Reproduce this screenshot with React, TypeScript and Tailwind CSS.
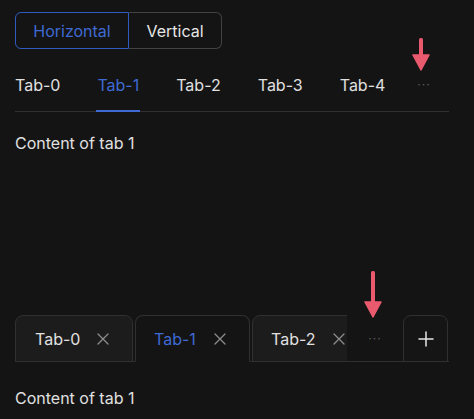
import React from "react";

function CloseIcon() {
  return (
    <svg width="12" height="12" viewBox="0 0 12 12" className="shrink-0">
      <path d="M1 1L11 11M11 1L1 11" stroke="#8c8c8c" strokeWidth="1.3" strokeLinecap="round" />
    </svg>
  );
}

function Arrow({ h }: { h: number }) {
  return (
    <svg width="20" height={h} viewBox={`0 0 20 ${h}`}>
      <rect x="8" y="0" width="4" height={h - 14} rx="1.5" fill="#ea5a6f" />
      <polygon points={`2,${h - 16} 18,${h - 16} 10,${h - 1}`} fill="#ea5a6f" strokeLinejoin="round" stroke="#ea5a6f" strokeWidth="1.5" />
    </svg>
  );
}

export default function App() {
  const topTabs = ["Tab-0", "Tab-1", "Tab-2", "Tab-3", "Tab-4"];
  return (
    <div className="relative w-[474px] h-[419px] bg-[#141414] overflow-hidden px-[15px] pt-[12px] text-[16px] leading-[24px] text-[#e0e0e0] font-['Inter','Noto_Sans',sans-serif]">
      {/* segmented */}
      <div className="flex h-[37px] w-[207px]">
        <div className="w-[114px] h-full flex items-center justify-center border border-[#2f5bc0] rounded-l-[6px] text-[#3f6ad3]">
          Horizontal
        </div>
        <div className="w-[93px] h-full flex items-center justify-center border border-l-0 border-[#424242] rounded-r-[6px] text-[#e6e6e6]">
          Vertical
        </div>
      </div>

      {/* line tabs */}
      <div className="relative flex items-center h-[63px] pt-[10px] w-[434px] border-b border-[#303030]">
        <div className="flex gap-[37px]">
          {topTabs.map((t, i) => (
            <div key={t} className={i === 1 ? "relative text-[#3f6ad3]" : ""}>
              {t}
              {i === 1 && (
                <div className="absolute left-[-1px] right-[-1px] bottom-[-15px] h-[2px] bg-[#3f6ad3]" />
              )}
            </div>
          ))}
        </div>
        <span className="ml-[32px] text-[12px] tracking-[1px] text-[#5c5c5c]">···</span>
      </div>

      <div className="mt-[19px]">Content of tab 1</div>

      {/* card tabs */}
      <div className="mt-[160px] flex h-[47px] w-[434px] shadow-[inset_0_-1px_0_#303030]">
        <div className="w-[332px] h-full overflow-hidden flex gap-[2px] shadow-[inset_0_-1px_0_#303030]">
          <div className="shrink-0 w-[118px] h-full flex items-center pl-[19px] gap-[17px] bg-[#1c1c1c] border border-[#303030] rounded-t-[8px]">
            <span>Tab-0</span>
            <CloseIcon />
          </div>
          <div className="shrink-0 w-[115px] h-full flex items-center pl-[18px] gap-[18px] bg-[#141414] border border-[#303030] border-b-transparent rounded-t-[8px]">
            <span className="text-[#3f6ad3]">Tab-1</span>
            <CloseIcon />
          </div>
          <div className="shrink-0 w-[116px] h-full flex items-center pl-[18px] gap-[17px] bg-[#1c1c1c] border border-[#303030] rounded-t-[8px]">
            <span>Tab-2</span>
            <CloseIcon />
          </div>
        </div>
        <div className="w-[56px] h-full flex items-center justify-center text-[12px] tracking-[1px] text-[#5c5c5c]">
          ···
        </div>
        <div className="w-[45px] h-full flex items-center justify-center border border-[#303030] rounded-t-[8px] bg-[#151515]">
          <svg width="16" height="16" viewBox="0 0 16 16">
            <path d="M8 1V15M1 8H15" stroke="#e6e6e6" strokeWidth="1.5" strokeLinecap="round" />
          </svg>
        </div>
      </div>

      <div className="mt-[24px]">Content of tab 1</div>

      {/* annotation arrows */}
      <div className="absolute left-[411px] top-[38px]">
        <Arrow h={33} />
      </div>
      <div className="absolute left-[363px] top-[271px]">
        <Arrow h={47} />
      </div>
    </div>
  );
}
